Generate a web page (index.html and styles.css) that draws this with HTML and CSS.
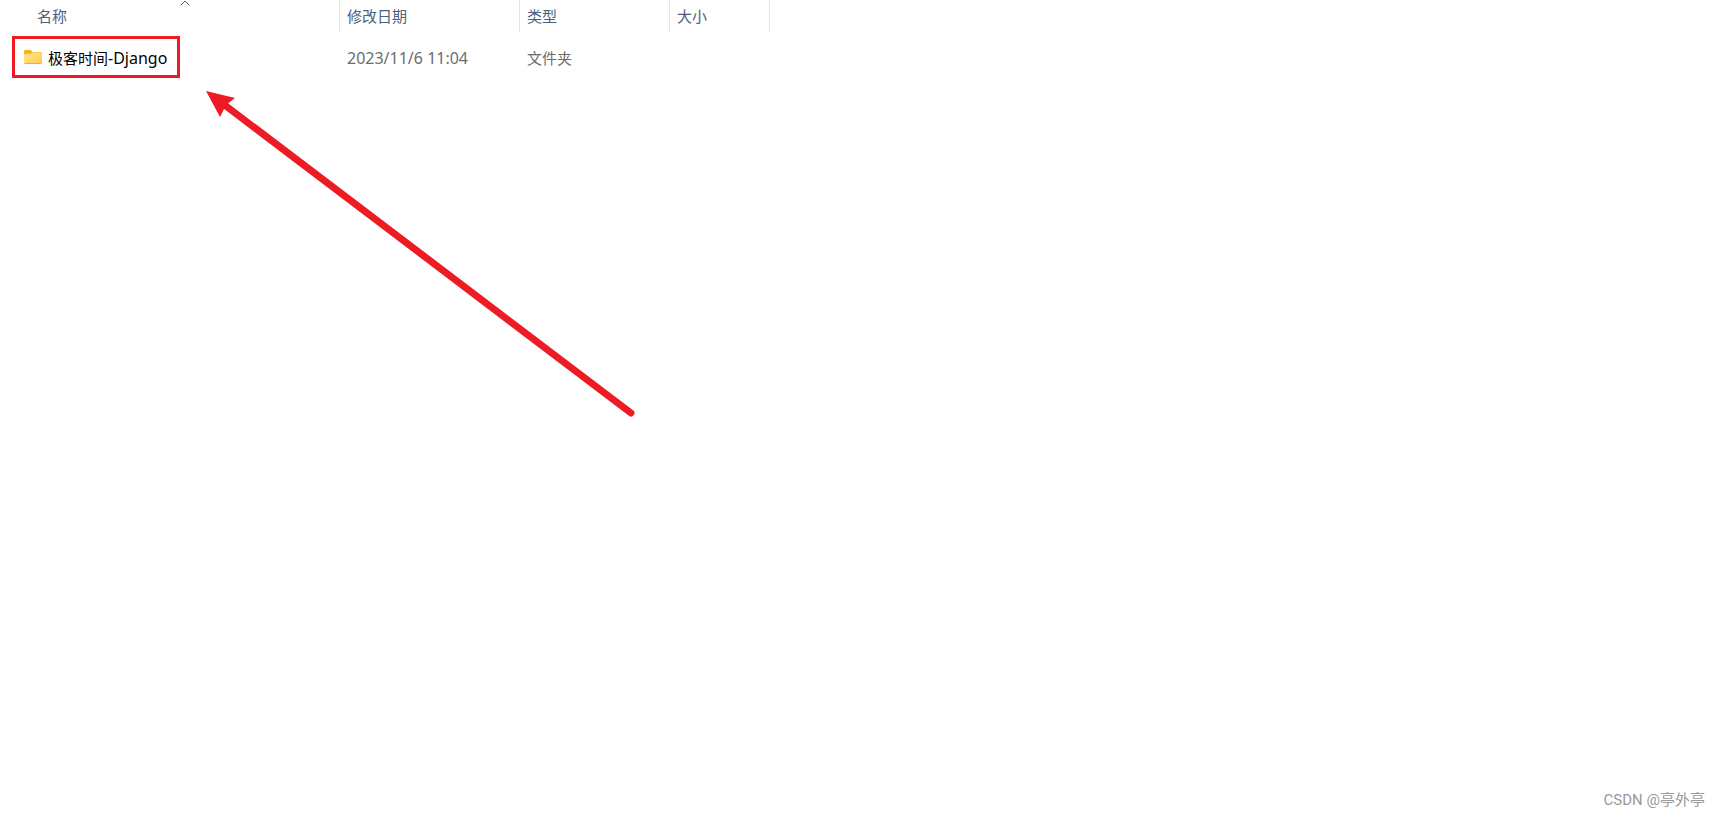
FILE: index.html
```
<!DOCTYPE html>
<html lang="zh-CN">
<head>
<meta charset="utf-8">
<title>文件列表</title>
<link rel="stylesheet" href="styles.css">
</head>
<body>
<main class="explorer">
  <table class="files">
    <colgroup><col class="col-name"><col class="col-date"><col class="col-type"><col class="col-size"></colgroup>
    <thead>
      <tr>
        <th class="name-head" scope="col" aria-sort="ascending"><button class="sort" type="button">名称</button>
          <svg class="caret" viewBox="0 0 10 6" aria-hidden="true"><path d="M.7 5.3 5 1l4.300 4.300"/></svg></th>
        <th scope="col"><button class="sort" type="button">修改日期</button></th>
        <th scope="col"><button class="sort" type="button">类型</button></th>
        <th scope="col"><button class="sort" type="button">大小</button></th>
      </tr>
    </thead>
    <tbody>
      <tr>
        <td class="name-cell">
          <a class="folder" href="#">
            <svg class="folder-icon" viewBox="0 0 18 15" aria-hidden="true">
              <defs><linearGradient id="front" x1="0" y1="0" x2="1" y2="1"><stop offset="0" stop-color="#ffe59a"/><stop offset="1" stop-color="#fccb4a"/></linearGradient></defs>
              <path fill="#f5b51c" d="M0 1Q0 0 1 0h5.200q.6 0 1 .5L8.300 2H17q1 0 1 1V8H0z"/>
              <path fill="url(#front)" d="M0 5q0-1 1-1h5.500l1.800-1.500H17q1 0 1 1V13q0 1-1 1H1q-1 0-1-1z"/>
              <path fill="none" stroke="#e8b13c" d="M.7 13.500h16.600"/>
            </svg>
            <span>极客时间<span class="latin">-Django</span></span>
          </a>
        </td>
        <td class="latin">2023/11/6 11:04</td>
        <td>文件夹</td>
        <td></td>
      </tr>
    </tbody>
  </table>
  <svg class="arrow" viewBox="0 0 430 328" aria-hidden="true">
    <path class="shaft" d="M16 12 425 322"/>
    <path class="head" d="M0 0 29 7 20 14 14 26z"/>
  </svg>
  <footer class="watermark"><span class="mark-latin">CSDN @</span>亭外亭</footer>
</main>
</body>
</html>
```
FILE: styles.css
```
* {
  box-sizing: border-box;
}

body {
  margin: 0;
  background: #fff;
  color: #6d6d6d;
  font: 15px/20px "Noto Sans CJK SC", sans-serif;
}

.explorer {
  position: relative;
  display: flex;
  flex-direction: column;
  align-items: flex-start;
  justify-content: space-between;
  min-height: 100vh;
}

.files {
  width: 770px;
  table-layout: fixed;
  border-collapse: separate;
  border-spacing: 0;
}

.col-name { width: 340px; }
.col-date { width: 180px; }
.col-type { width: 150px; }
.col-size { width: 100px; }

th,
td {
  padding: 0 0 0 7px;
  text-align: left;
  font-weight: 400;
}

th {
  height: 32px;
  border-right: 1px solid #e5e5e5;
}

.name-head {
  position: relative;
  padding-left: 37px;
}

.sort {
  display: block;
  padding: 0;
  border: 0;
  background: none;
  color: #4c607a;
  font: inherit;
}

.caret {
  position: absolute;
  top: 0;
  left: 180px;
  width: 10px;
  height: 6px;
  fill: none;
  stroke: #5a5a5a;
}

td {
  height: 52px;
}

.name-cell {
  padding: 4px 0 0 12px;
  vertical-align: top;
}

.folder {
  display: flex;
  align-items: center;
  gap: 6px;
  width: 168px;
  height: 42px;
  padding: 1px 8px 0 9px;
  border: 3px solid #ed1c24;
  color: #000;
  text-decoration: none;
  white-space: nowrap;
}

.folder-icon {
  flex: none;
  width: 18px;
  height: 15px;
}

.latin {
  font-family: "Noto Sans", "Noto Sans CJK SC", sans-serif;
  font-size: 16px;
}

.arrow {
  position: absolute;
  top: 91px;
  left: 206px;
  width: 430px;
  height: 328px;
  pointer-events: none;
}

.shaft {
  fill: none;
  stroke: #ed1c24;
  stroke-width: 7;
  stroke-linecap: round;
}

.head {
  fill: #ed1c24;
}

.watermark {
  align-self: flex-end;
  padding: 0 15px 6px 0;
  color: #999;
}

.mark-latin {
  font-family: Roboto, sans-serif;
}
```
